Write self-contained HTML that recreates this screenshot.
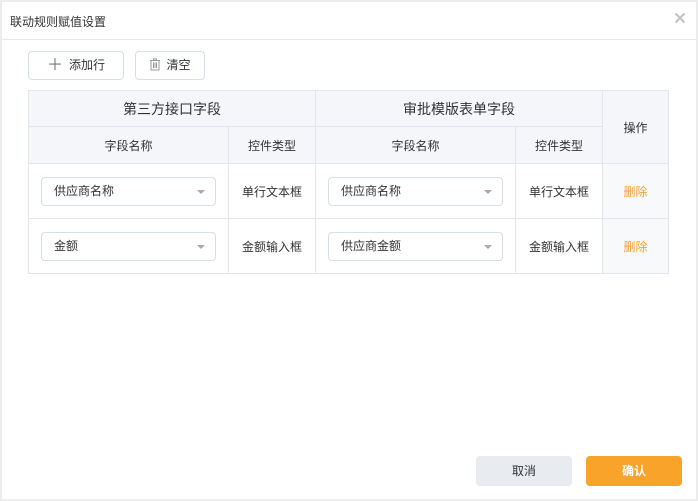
<!DOCTYPE html>
<html><head><meta charset="utf-8"><style>
*{box-sizing:border-box;margin:0;padding:0}
body{width:698px;height:501px;background:#ececec;font-family:"Liberation Sans","Noto Sans CJK SC",sans-serif;font-size:12px;color:#333;position:relative;overflow:hidden}
.dlg{position:absolute;left:2px;top:2px;width:694px;height:497px;background:#fff}
.title{position:absolute;left:8px;top:11px;font-size:12px;color:#333}
.hl{position:absolute;left:0;top:37px;width:694px;height:1px;background:#e3e8ee}
.x{position:absolute;left:672px;top:10px}
.btn{position:absolute;border:1px solid #d8dee6;border-radius:4px;height:29px;line-height:27px;font-size:12px;color:#333;text-align:center}
.a{position:absolute;border-collapse:collapse;left:26px;top:88px;width:640px}
table{border-collapse:collapse;table-layout:fixed}
td,th{border:1px solid #e1e6ec;text-align:center;font-weight:normal;font-size:12px;color:#333}
th{background:#f4f6f9}
.sel{margin:0 12px;height:29px;border:1px solid #d8dee6;border-radius:4px;text-align:left;padding-left:12px;line-height:27px;position:relative;background:#fff}
.sel:after{content:"";position:absolute;right:10px;top:12px;border:4px solid transparent;border-top:4px solid #aaa}
.del{color:#f9a03a}
.f{position:absolute;top:454px;width:96px;height:30px;line-height:30px;border-radius:4px;text-align:center;font-size:12px}
</style></head><body>
<div class="dlg">
<div class="title">联动规则赋值设置</div>
<svg class="x" width="12" height="12" viewBox="0 0 12 12"><path d="M1.5 1.5L10.5 10.5M10.5 1.5L1.5 10.5" stroke="#c4c4c4" stroke-width="2.2"/></svg>
<div class="hl"></div>
<div class="btn" style="left:26px;top:49px;width:96px"><span style="color:#777;font-size:16px;vertical-align:-1px;margin-right:6px">＋</span>添加行</div>
<div class="btn" style="left:133px;top:49px;width:70px"><svg width="12" height="13" viewBox="0 0 12 13" style="vertical-align:-2px;margin-right:5px"><path d="M1 2.5H11M4.5 2.5V1H7.5V2.5M2 2.5V12H10V2.5M4.5 4.5V10M6 4.5V10M7.5 4.5V10" stroke="#999" fill="none" stroke-width="1"/></svg>清空</div>
<table class="a">
<colgroup><col style="width:200px"><col style="width:87px"><col style="width:200px"><col style="width:87px"><col style="width:66px"></colgroup>
<tr style="height:36px"><th colspan="2" style="font-size:14px">第三方接口字段</th><th colspan="2" style="font-size:14px">审批模版表单字段</th><th rowspan="2">操作</th></tr>
<tr style="height:37px"><th>字段名称</th><th>控件类型</th><th>字段名称</th><th>控件类型</th></tr>
<tr style="height:55px"><td><div class="sel">供应商名称</div></td><td>单行文本框</td><td><div class="sel">供应商名称</div></td><td>单行文本框</td><td class="del" style="background:#f8f9fb">删除</td></tr>
<tr style="height:55px"><td><div class="sel">金额</div></td><td>金额输入框</td><td><div class="sel">供应商金额</div></td><td>金额输入框</td><td class="del" style="background:#f8f9fb">删除</td></tr>
</table>
<div class="f" style="left:474px;background:#e8ebf0;color:#333">取消</div>
<div class="f" style="left:584px;background:#f9a32b;color:#fff;font-weight:bold">确认</div>
</div>
</body></html>
